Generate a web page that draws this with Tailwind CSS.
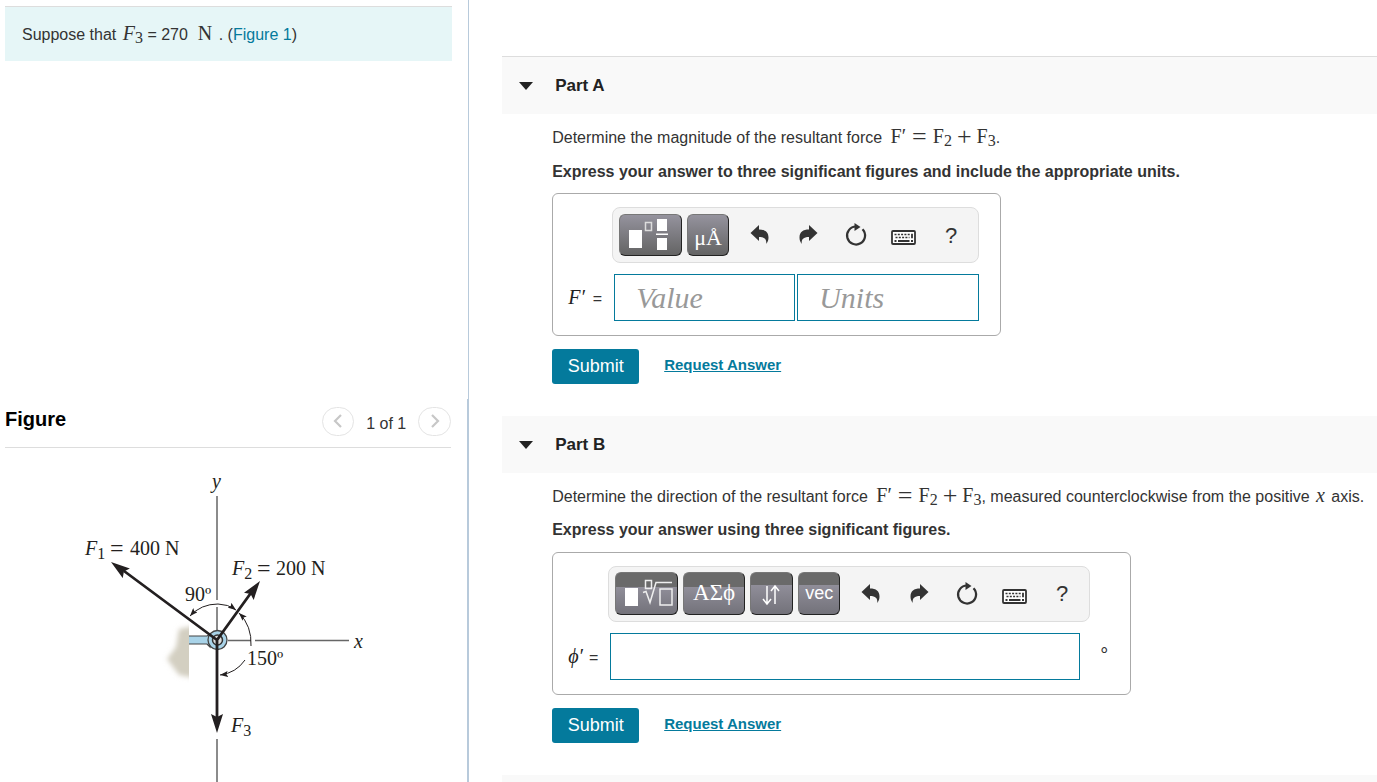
<!DOCTYPE html>
<html lang="en">

<head>
  <meta charset="UTF-8" />
  <meta name="viewport" content="width=device-width, initial-scale=1.0" />
  <title>Resultant Force</title>
  <script src="https://cdn.jsdelivr.net/npm/@tailwindcss/browser@4"></script>
</head>

<body class="bg-white font-['Liberation_Sans',Arial,sans-serif] text-base text-[#333]">
  <!-- Shared toolbar icons -->
  <svg class="hidden">
    <symbol id="undo" viewBox="0 0 20 20">
      <path fill="#333" d="M9 0v4.500c6 0 9.500 2.500 9.500 8 0 2.500-.6 4.200-2.200 6.500.4-5-1.800-7-7.300-7v4L.5 8z" />
    </symbol>
    <symbol id="reset" viewBox="0 0 24 24">
      <path fill="none" stroke="#333" stroke-width="2.200" d="M18.500 6.200a9 9 0 1 1-6.500-2.700" />
      <path fill="#333" d="M10.500 0l6 4-6 4z" />
    </symbol>
    <symbol id="keyboard" viewBox="0 0 26 16">
      <rect x="1" y="1" width="23" height="13" rx="1" fill="#fff" stroke="#333" stroke-width="1.800" />
      <path stroke="#333" stroke-width="1.600" stroke-dasharray="2 1.300" d="M3.500 4.500h16" />
      <path stroke="#333" stroke-width="1.600" stroke-dasharray="2 1.300" d="M4.500 7.500h14" />
      <path stroke="#333" stroke-width="1.800" d="M21 3.700v4.600M3.500 11h2M7 11h11.500M20 11h2" />
    </symbol>
  </svg>

  <div class="flex h-screen overflow-hidden">
    <!-- Left column -->
    <aside class="flex w-[calc(34%+1px)] shrink-0 flex-col">
      <div class="h-[51%] shrink-0 border-r border-[#b8cadb] pl-[5px] pr-4 pt-1.5">
        <div class="flex h-[55px] items-center border-t border-[#ddd] bg-[#e6f6f7] pl-[17px] pt-0.5">
          <p class="whitespace-nowrap">Suppose that <span class="ml-0.5 font-['Liberation_Serif',serif] text-xl leading-4"><i>F</i><sub class="bottom-[-3px] text-base leading-none">3</sub></span> = 270&nbsp; <span class="ml-px mr-0.5 font-['Liberation_Serif',serif] text-xl leading-4">N</span> . (<a href="#figure" class="text-[#047a9c]">Figure 1</a>)</p>
        </div>
      </div>

      <section id="figure" class="min-h-0 flex-1 overflow-hidden border-r-2 border-[#b8cadb] pl-[5px] pr-4">
        <div class="flex h-[49px] items-center border-b border-[#ddd]">
          <h2 class="flex-1 pb-2 text-xl font-bold text-black">Figure</h2>
          <div class="flex items-center gap-3 pb-[3px]">
            <button aria-label="Previous figure" class="flex h-[29px] w-8 items-center justify-center rounded-full border border-[#e4e4e4]">
              <svg class="h-4 w-4" viewBox="0 0 16 16" fill="none" stroke="#c7c7c7" stroke-width="2.200"><path d="M11 2L5 8l6 6" /></svg>
            </button>
            <span class="pt-1.5">1 of 1</span>
            <button aria-label="Next figure" class="flex h-[29px] w-[33px] items-center justify-center rounded-full border border-[#e4e4e4]">
              <svg class="h-4 w-4" viewBox="0 0 16 16" fill="none" stroke="#c7c7c7" stroke-width="2.200"><path d="M5 2l6 6-6 6" /></svg>
            </button>
          </div>
        </div>
        <svg class="h-[334px] w-[446px] font-['Liberation_Serif',serif] text-xl" viewBox="5 448 446 334" role="img" aria-label="Three forces acting on an eye bolt">
          <defs>
            <filter id="soft" x="-20%" y="-20%" width="140%" height="140%"><feGaussianBlur stdDeviation="2.500" /></filter>
            <clipPath id="wallEdge"><path d="M150 600h39v100h-39z" /></clipPath>
            <marker id="tip" viewBox="0 0 8 6" markerWidth="8" markerHeight="6" refX="8" refY="3" orient="auto-start-reverse" markerUnits="userSpaceOnUse"><path d="M0 0l8 3-8 3 1.500-3z" fill="#231f20" /></marker>
            <marker id="head" viewBox="0 0 19 12" markerWidth="19" markerHeight="12" refX="19" refY="6" orient="auto" markerUnits="userSpaceOnUse"><path d="M0 0l19 6-19 6 3-6z" fill="#231f20" /></marker>
          </defs>
          <!-- Wall -->
          <g clip-path="url(#wallEdge)"><path filter="url(#soft)" fill="#d3cfc1" d="M179 629l20-4v54l-20-4-12-16 9-12z" /></g>
          <!-- Axes -->
          <path fill="none" stroke="#666" stroke-width="1.500" d="M217 496v104M217 607v33M217 739v43M228 640.500h23M255 640.500h94" />
          <!-- Bolt -->
          <path fill="#a9d3e8" stroke="#444" stroke-width="1.200" d="M189 636h18l3-2v13l-3-3h-18" />
          <circle cx="217.500" cy="640" r="9.500" fill="#a9d3e8" stroke="#444" stroke-width="1.300" />
          <circle cx="217.500" cy="640" r="5" fill="#ddd" stroke="#333" stroke-width="1.500" />
          <!-- Force vectors -->
          <g stroke="#231f20" fill="none">
            <path stroke-width="2.800" d="M217 640L124 571M217 640l36-50M217 640v79" />
            <g stroke="none">
              <path d="M217 640L111 562" marker-end="url(#head)" />
              <path d="M217 640L260 581" marker-end="url(#head)" />
              <path d="M217 640V733" marker-end="url(#head)" />
            </g>
            <path d="M190 616q11-12 28-12 10 0 18 6" marker-start="url(#tip)" marker-end="url(#tip)" />
            <path d="M239 613q13 13 12 33" marker-start="url(#tip)" />
            <path d="M245 660q-9 13-25 15" marker-end="url(#tip)" />
          </g>
          <!-- Labels -->
          <g fill="#231f20">
            <text x="212" y="488" font-style="italic">y</text>
            <text x="354" y="648" font-style="italic">x</text>
            <text x="85" y="555"><tspan font-style="italic">F</tspan><tspan font-size="16" dy="4">1</tspan><tspan dy="-3" x="110" font-size="24">=</tspan><tspan x="130" dy="-1">400 N</tspan></text>
            <text x="232" y="575"><tspan font-style="italic">F</tspan><tspan font-size="16" dy="4">2</tspan><tspan dy="-3" x="257" font-size="24">=</tspan><tspan x="276" dy="-1">200 N</tspan></text>
            <text x="231" y="732"><tspan font-style="italic">F</tspan><tspan font-size="16" dy="4">3</tspan></text>
            <text x="185" y="601">90º</text>
            <text x="247" y="665">150º</text>
          </g>
        </svg>
      </section>
    </aside>

    <!-- Right column -->
    <main class="min-w-0 flex-1 overflow-hidden pl-[33px] pt-14">
      <section>
        <div class="flex h-[58px] items-center border-t border-[#ddd] bg-[#f9f9f9] pl-[17px]">
          <svg class="mr-[22px] h-2 w-[14px]" viewBox="0 0 14 8"><path fill="#222" d="M0 0h14L7 8z" /></svg>
          <h2 class="text-[17px] font-bold text-[#222]">Part A</h2>
        </div>
        <div class="flex flex-col items-start pb-8 pl-[50px] pt-3">
          <p class="h-6 whitespace-nowrap leading-6">Determine the magnitude of the resultant force <span class="ml-1 font-['Liberation_Serif',serif] text-xl leading-4">F′<span class="mx-1.5 align-[-2px] text-[26px] leading-4">=</span>F<sub class="bottom-[-3px] text-base leading-none">2</sub><span class="mx-[5px] align-[-2px] text-[26px] leading-4">+</span>F<sub class="bottom-[-3px] text-base leading-none">3</sub></span>.</p>
          <p class="mt-2.5 h-6 whitespace-nowrap font-bold leading-6">Express your answer to three significant figures and include the appropriate units.</p>

          <div class="mt-[9px] grid grid-cols-[44px_auto] gap-y-[11px] rounded-md border border-[#aaa] pb-[14px] pl-[15px] pr-[21px] pt-[13px]">
            <div class="col-start-2 flex h-14 items-center rounded-lg border border-[#ddd] bg-[#f4f4f4] pl-1.5 pr-[3px]">
              <button aria-label="Templates" class="mr-[5px] h-[42px] w-[63px] rounded-md border border-[#777] border-b-[#222] border-r-[#222] bg-linear-to-b from-[#95939e] to-[#646464]">
                <svg class="h-10 w-[61px]" viewBox="0 0 61 40"><path fill="#fff" d="M9 15h13v18H9zM37 4h10v12H37zM37 23h10v12H37zM36 18.500h12v1.500H36z" /><path fill="none" stroke="#ddd" stroke-width="1.500" d="M25.500 7.500h6v8h-6z" /></svg>
              </button>
              <button aria-label="Units symbols" class="mr-[7px] h-[42px] w-[42px] rounded-md border border-[#777] border-b-[#222] border-r-[#222] bg-linear-to-b from-[#95939e] to-[#646464] pt-1 font-['Liberation_Serif',serif] text-[22px] text-white">μÅ</button>
              <button aria-label="Undo" class="flex w-12 justify-center"><svg class="h-5 w-5"><use href="#undo" /></svg></button>
              <button aria-label="Redo" class="flex w-12 justify-center"><svg class="h-5 w-5 -scale-x-100"><use href="#undo" /></svg></button>
              <button aria-label="Reset" class="flex w-12 justify-center"><svg class="h-6 w-6"><use href="#reset" /></svg></button>
              <button aria-label="Keyboard" class="flex w-12 justify-center pt-1.5"><svg class="h-4 w-[26px]"><use href="#keyboard" /></svg></button>
              <button aria-label="Help" class="w-[46px] text-[22px]">?</button>
            </div>
            <label for="value" class="self-center whitespace-nowrap pb-0.5 text-base"><i class="mr-2 font-['Liberation_Serif',serif] text-xl text-[#222]">F′</i>=</label>
            <div class="flex gap-0.5 pl-0.5">
              <input id="value" type="text" placeholder="Value" class="h-[47px] w-[181px] border border-[#047a9c] px-[21px] font-['Liberation_Serif',serif] text-[30px] italic placeholder:text-[#999]" />
              <input id="units" type="text" aria-label="Units" placeholder="Units" class="h-[47px] w-[182px] border border-[#047a9c] px-[21px] font-['Liberation_Serif',serif] text-[30px] italic placeholder:text-[#999]" />
            </div>
          </div>

          <div class="mt-[13px] flex items-center gap-[25px]">
            <button class="h-[35px] w-[87px] rounded-[3px] bg-[#047a9c] pb-0.5 text-lg leading-6 text-white">Submit</button>
            <a href="#" class="pb-1 text-[15px] font-bold leading-5 text-[#047a9c] underline">Request Answer</a>
          </div>
        </div>
      </section>

      <section>
        <div class="flex h-[57px] items-center bg-[#f9f9f9] pl-[17px]">
          <svg class="mr-[22px] h-2 w-[14px]" viewBox="0 0 14 8"><path fill="#222" d="M0 0h14L7 8z" /></svg>
          <h2 class="text-[17px] font-bold text-[#222]">Part B</h2>
        </div>
        <div class="flex flex-col items-start pb-8 pl-[50px] pt-3">
          <p class="h-6 whitespace-nowrap leading-6">Determine the direction of the resultant force <span class="ml-1 font-['Liberation_Serif',serif] text-xl leading-4">F′<span class="mx-1.5 align-[-2px] text-[26px] leading-4">=</span>F<sub class="bottom-[-3px] text-base leading-none">2</sub><span class="mx-[5px] align-[-2px] text-[26px] leading-4">+</span>F<sub class="bottom-[-3px] text-base leading-none">3</sub></span>, measured counterclockwise from the positive <i class="mx-0.5 font-['Liberation_Serif',serif] text-xl leading-4">x</i> axis.</p>
          <p class="mt-[9px] h-6 whitespace-nowrap font-bold leading-6">Express your answer using three significant figures.</p>

          <div class="mt-2.5 grid grid-cols-[40px_auto] gap-y-[11px] rounded-md border border-[#aaa] pb-[14px] pl-[15px] pr-[22px] pt-[13px]">
            <div class="col-start-2 flex h-14 w-[482px] items-center rounded-lg border border-[#ddd] bg-[#f4f4f4] pb-px pl-1.5 pr-[3px]">
              <button aria-label="Root templates" class="mr-[5px] h-[43px] w-[63px] rounded-md border border-[#777] border-b-[#222] border-r-[#222] bg-linear-to-b from-[#6a6a6a] from-35% via-[#908e99] via-35% to-[#73727a]">
                <svg class="h-[41px] w-[61px]" viewBox="0 0 61 41" fill="none" stroke="#eee" stroke-width="1.500"><path fill="#fff" stroke="none" d="M9 15h13v18H9z" /><path d="M29.500 7.500h6v8h-6zM44 16h12v16H44z" /><path stroke-width="1.500" d="M27 19.500l3-1 4 11 6-20h16" /></svg>
              </button>
              <button aria-label="Greek letters" class="mr-[5px] h-[43px] w-[62px] rounded-md border border-[#777] border-b-[#222] border-r-[#222] bg-linear-to-b from-[#6a6a6a] from-35% via-[#908e99] via-35% to-[#73727a] pb-0.5 font-['Liberation_Serif',serif] text-[23px] leading-6 text-white">ΑΣϕ</button>
              <button aria-label="Arrows" class="mr-[5px] h-[43px] w-[43px] rounded-md border border-[#777] border-b-[#222] border-r-[#222] bg-linear-to-b from-[#6a6a6a] from-30% via-[#908e99] via-30% to-[#73727a]">
                <svg class="h-[41px] w-[41px]" viewBox="0 0 41 41" fill="none" stroke="#fff" stroke-width="1.500"><path d="M16 13v17M12 26l4 5 4-5M24 31V14M20 18l4-5 4 5" /></svg>
              </button>
              <button aria-label="Vector" class="mr-[7px] h-[43px] w-[42px] rounded-md border border-[#777] border-b-[#222] border-r-[#222] bg-linear-to-b from-[#6a6a6a] from-30% via-[#908e99] via-30% to-[#73727a] pb-0.5 text-lg leading-6 text-white">vec</button>
              <button aria-label="Undo" class="flex w-12 justify-center"><svg class="h-5 w-5"><use href="#undo" /></svg></button>
              <button aria-label="Redo" class="flex w-12 justify-center"><svg class="h-5 w-5 -scale-x-100"><use href="#undo" /></svg></button>
              <button aria-label="Reset" class="flex w-12 justify-center"><svg class="h-6 w-6"><use href="#reset" /></svg></button>
              <button aria-label="Keyboard" class="flex w-12 justify-center pt-1.5"><svg class="h-4 w-[26px]"><use href="#keyboard" /></svg></button>
              <button aria-label="Help" class="w-[46px] text-[22px]">?</button>
            </div>
            <label for="phi" class="self-center whitespace-nowrap pb-0.5 text-base"><i class="mr-1.5 font-['Liberation_Serif',serif] text-xl text-[#222]">ϕ′</i>=</label>
            <div class="flex gap-5 pl-0.5">
              <input id="phi" type="text" class="h-[47px] w-[470px] border border-[#047a9c] px-[21px] font-['Liberation_Serif',serif] text-[30px]" />
              <span class="pt-2 text-xl">°</span>
            </div>
          </div>

          <div class="mt-[13px] flex items-center gap-[25px]">
            <button class="h-[35px] w-[87px] rounded-[3px] bg-[#047a9c] pb-0.5 text-lg leading-6 text-white">Submit</button>
            <a href="#" class="pb-1 text-[15px] font-bold leading-5 text-[#047a9c] underline">Request Answer</a>
          </div>
        </div>
      </section>

      <div class="h-[58px] bg-[#f9f9f9]"></div>
    </main>
  </div>
</body>

</html>
